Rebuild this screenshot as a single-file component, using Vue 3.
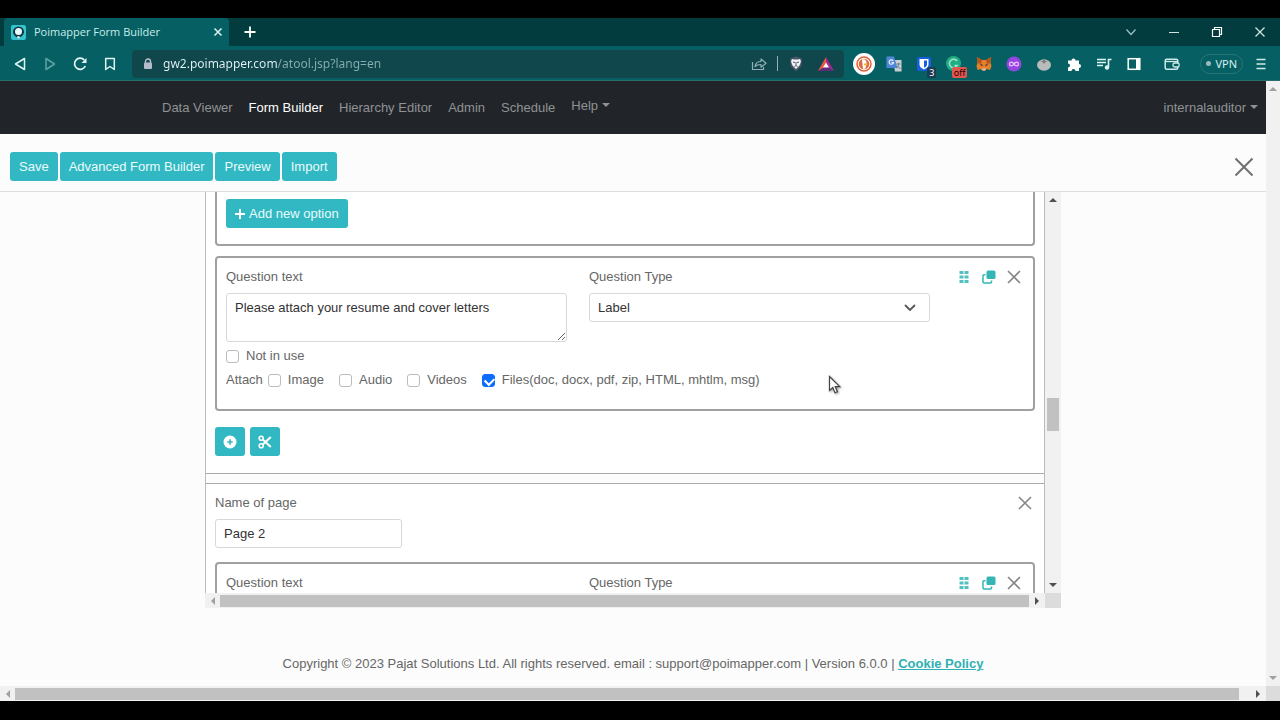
<template>
  <div class="screen">
    <header class="browser">
      <div class="tab-strip">
        <div class="tab">
          <svg class="favicon" viewBox="0 0 15 15" width="15" height="15">
            <rect width="15" height="15" rx="2" fill="#35c3cf" />
            <path d="M7.500 1.500a5.500 5.500 0 0 1 5.500 5.500c0 3-3 4.500-5.500 7-2.500-2.500-5.500-4-5.500-7a5.500 5.500 0 0 1 5.500-5.500z" fill="#12343b" />
            <circle cx="7.500" cy="6.500" r="3.500" fill="#e8fbfc" />
            <path d="M5.500 12l2-1 2 1-2 2z" fill="#d7f4f5" />
          </svg>
          <span class="tab-title">Poimapper Form Builder</span>
          <button class="plain tab-close" aria-label="Close tab">
            <svg viewBox="0 0 10 10" width="10" height="10"><path d="M1.500 1.500l7 7M8.500 1.500l-7 7" stroke="#d5f0f0" stroke-width="1.600" /></svg>
          </button>
        </div>
        <button class="plain new-tab" aria-label="New tab">
          <svg viewBox="0 0 12 12" width="12" height="12"><path d="M6 .5v11M.5 6h11" stroke="#fff" stroke-width="1.800" /></svg>
        </button>
        <div class="window-buttons">
          <button class="plain" aria-label="Search tabs">
            <svg viewBox="0 0 12 12" width="12" height="12"><path d="M1.500 3.500L6 8.500l4.500-5" fill="none" stroke="#9fc4c3" stroke-width="1.200" /></svg>
          </button>
          <button class="plain" aria-label="Minimize">
            <svg viewBox="0 0 12 12" width="12" height="12"><path d="M1 6.500h10" stroke="#cfe3e2" /></svg>
          </button>
          <button class="plain" aria-label="Restore">
            <svg viewBox="0 0 12 12" width="12" height="12"><path d="M1.500 3.500h7v7h-7zM3.500 3.500v-2h7v7h-2" fill="none" stroke="#fff" stroke-width="1.200" /></svg>
          </button>
          <button class="plain" aria-label="Close window">
            <svg viewBox="0 0 12 12" width="12" height="12"><path d="M1.500 1.500l9 9M10.500 1.500l-9 9" stroke="#d5e8e7" stroke-width="1.200" /></svg>
          </button>
        </div>
      </div>

      <div class="address-row">
        <button class="plain tool" aria-label="Back">
          <svg viewBox="0 0 14 14" width="14" height="14"><path d="M11.500 1.500v11L2.500 7z" fill="none" stroke="#dff5f4" stroke-width="1.500" stroke-linejoin="round" /></svg>
        </button>
        <button class="plain tool" aria-label="Forward">
          <svg viewBox="0 0 14 14" width="14" height="14"><path d="M3 1.500v11L11.500 7z" fill="none" stroke="#5da3a3" stroke-width="1.500" stroke-linejoin="round" /></svg>
        </button>
        <button class="plain tool" aria-label="Reload">
          <svg viewBox="0 0 14 14" width="14" height="14">
            <path d="M12.300 9a5.600 5.600 0 1 1-1-6" fill="none" stroke="#e6f8f7" stroke-width="1.700" />
            <path d="M13.500 1v5h-5z" fill="#e6f8f7" />
          </svg>
        </button>
        <button class="plain tool" aria-label="Bookmark">
          <svg viewBox="0 0 14 14" width="14" height="14"><path d="M2.700 1.500h8.600v11L7 9.500l-4.300 3z" fill="none" stroke="#dff5f4" stroke-width="1.500" stroke-linejoin="round" /></svg>
        </button>

        <div class="address-bar">
          <svg viewBox="0 0 10 12" width="10" height="12">
            <path d="M2.500 5V3.500a2.500 2.500 0 0 1 5 0V5" fill="none" stroke="#b4bccb" stroke-width="1.400" />
            <rect x="1" y="4.500" width="8" height="6.500" rx="1" fill="#b4bccb" />
          </svg>
          <input v-model="url" class="url" type="text" aria-label="Address" />
          <svg viewBox="0 0 16 14" width="16" height="14">
            <path d="M1.500 5v7.500h11v-2.500" fill="none" stroke="#90b0b3" stroke-width="1.200" />
            <path d="M4 9.500c.5-3.500 2.500-5 6-5V2l5 4.200-5 4V7.500c-2.500 0-4.500.3-6 2z" fill="none" stroke="#90b0b3" stroke-width="1.200" stroke-linejoin="round" />
          </svg>
          <span class="divider"></span>
          <button class="plain tool" aria-label="Shields">
            <svg viewBox="0 0 14 16" width="14" height="16">
              <path d="M7 .5l6 2-.5 7.500L7 15.500 1.500 10 1 2.500z" fill="#4b5566" />
              <path d="M3 3l2 .5h4l2-.5 1 2.500-1.500 4L7 13 3.500 9.500 2 5.500z" fill="#f1f3f7" />
              <path d="M4 6l2 .5M10 6l-2 .5M7 6v3M5.500 10.500L7 9.500l1.500 1" stroke="#4b5566" fill="none" />
            </svg>
          </button>
          <button class="plain tool" aria-label="Rewards">
            <svg viewBox="0 0 16 14" width="16" height="14">
              <path d="M8 0L0 14l8-4.500z" fill="#f0563f" />
              <path d="M8 0l8 14-8-4.500z" fill="#a22a8e" />
              <path d="M0 14h16L8 9z" fill="#5b2d7d" />
              <path d="M8 5.500l3 5H5z" fill="#fff" />
            </svg>
          </button>
        </div>

        <div class="extensions">
          <button class="plain tool" aria-label="DuckDuckGo">
            <svg viewBox="0 0 22 22" width="22" height="22">
              <circle cx="11" cy="11" r="11" fill="#fff" />
              <circle cx="11" cy="11" r="7" fill="#fff" stroke="#e2613b" stroke-width="1.500" />
              <circle cx="11" cy="11" r="5.300" fill="#df6a43" />
              <path d="M9 6.500c3-.8 4.500 1 4.500 3.500l-1 5.500-2.500.5z" fill="#fff" />
              <path d="M11 10.500h3.500v1.800H11z" fill="#f3b42c" />
            </svg>
          </button>
          <button class="plain tool" aria-label="Translate">
            <svg viewBox="0 0 16 16" width="16" height="16">
              <path d="M7 4h8.500v11.500H9z" fill="#c9cfd2" />
              <path d="M.5.500H8l3.500 11.500h-11z" fill="#4f87d8" />
              <path d="M7.300 5A2.200 2.200 0 1 0 7.500 6.500H5.500" fill="none" stroke="#e8f0ff" stroke-width="1.200" />
              <path d="M10.500 8h4M12.500 7v1c0 2-1 3.500-2 4M11.500 10l3 3" fill="none" stroke="#6b7d88" />
            </svg>
          </button>
          <button class="plain tool" aria-label="Bitwarden">
            <svg viewBox="0 0 16 16" width="16" height="16">
              <rect x="1" y="1" width="14" height="14" rx="2" fill="#175ddc" />
              <path d="M3.500 3h9v5.500c0 2.500-2 3.800-4.500 5-2.500-1.200-4.500-2.500-4.500-5z" fill="#fff" />
              <path d="M8 4.500h3v4c0 1.500-1.300 2.500-3 3.300z" fill="#175ddc" />
            </svg>
            <span class="badge count">3</span>
          </button>
          <button class="plain tool" aria-label="Grammarly">
            <svg viewBox="0 0 16 16" width="16" height="16">
              <circle cx="7.500" cy="7.500" r="7.500" fill="#20ad83" />
              <path d="M11 5a4.200 4.200 0 1 0 .3 4.500H8.500" fill="none" stroke="#9ee5cd" stroke-width="1.500" />
            </svg>
            <span class="badge off">off</span>
          </button>
          <button class="plain tool" aria-label="MetaMask">
            <svg viewBox="0 0 16 16" width="16" height="16">
              <path d="M1 1l5 3h4l5-3-.5 6 1 3-1.500 4-3.500-1-1.500 1.500h-3L4.500 13 1.500 14 .5 10l1-3z" fill="#e4802c" />
              <path d="M1 1l5 3-1 4-3.500-1zM15 1l-5 3 1 4 3.500-1z" fill="#b9541b" />
              <path d="M6 12.500h4l-.5 2h-3z" fill="#d8c2b0" />
              <path d="M4.500 8.500l2 1M11.500 8.500l-2 1" stroke="#2d2a33" stroke-width="1.200" />
            </svg>
          </button>
          <button class="plain tool" aria-label="Loop">
            <svg viewBox="0 0 16 16" width="16" height="16">
              <circle cx="8" cy="8" r="7.500" fill="#9345e0" />
              <path d="M8 8C6.500 5.500 3.500 5.500 3.500 8s3 2.500 4.500 0 4.500-2.500 4.500 0-3 2.500-4.500 0z" fill="none" stroke="#f3c5fb" stroke-width="1.300" />
            </svg>
          </button>
          <button class="plain tool" aria-label="Tomato timer">
            <svg viewBox="0 0 16 16" width="16" height="16">
              <ellipse cx="8" cy="9" rx="7" ry="5.800" fill="#b9bcba" />
              <path d="M4 4.500l3 .5 1-3 1 3 3-.5-3 2-1 1.500L7 6.500z" fill="#737c7a" />
            </svg>
          </button>
          <button class="plain tool" aria-label="Extensions">
            <svg viewBox="0 0 16 16" width="16" height="16">
              <path d="M2 4.500h3.500a2 2 0 1 1 4 0H13V8a2 2 0 1 1 0 4v3H9.500a2 2 0 0 0-4 0H2v-3.500a2 2 0 0 0 0-4z" fill="#fff" />
            </svg>
          </button>
          <button class="plain tool" aria-label="Media">
            <svg viewBox="0 0 16 16" width="16" height="16">
              <path d="M1 3.500h9M1 6.500h9M1 9.500h6M12.500 11V3.500H15.500" fill="none" stroke="#dff5f4" stroke-width="1.600" />
              <circle cx="11" cy="11.500" r="2.200" fill="#dff5f4" />
            </svg>
          </button>
          <button class="plain tool" aria-label="Side panel">
            <svg viewBox="0 0 16 16" width="16" height="16">
              <rect x="2.200" y="2.700" width="11.600" height="10.600" fill="none" stroke="#fff" stroke-width="1.500" />
              <path d="M10 3h4v10h-4z" fill="#fff" />
            </svg>
          </button>
        </div>
        <button class="plain tool wallet" aria-label="Wallet">
          <svg viewBox="0 0 16 16" width="16" height="16">
            <rect x="1.200" y="3.200" width="12.600" height="10" rx="1.500" fill="none" stroke="#cfeaea" stroke-width="1.500" />
            <path d="M1.500 5.500h12" stroke="#cfeaea" stroke-width="1.300" />
            <rect x="9" y="7" width="6.200" height="4" rx="1.800" fill="#0b5c5f" stroke="#cfeaea" stroke-width="1.300" />
          </svg>
        </button>
        <button class="vpn"><i class="dot"></i>VPN</button>
        <button class="plain tool" aria-label="Menu">
          <svg viewBox="0 0 14 14" width="14" height="14"><path d="M2.500 2.500h9M2.500 7h9M2.500 11.500h9" stroke="#cfeaea" stroke-width="1.600" /></svg>
        </button>
      </div>
    </header>

    <div class="viewport">
      <div class="document">
        <nav class="site-nav">
          <a v-for="link in links" :key="link" href="#" :class="{ active: link === 'Form Builder' }">{{ link }}</a>
          <a href="#" class="caret help">Help</a>
          <a href="#" class="caret user">internalauditor</a>
        </nav>

        <div class="actions">
          <button v-for="action in actions" :key="action" class="btn">{{ action }}</button>
          <button class="plain close-form" aria-label="Close form">
            <svg viewBox="0 0 20 20" width="20" height="20"><path d="M1.500 1.500l17 17M18.500 1.500l-17 17" stroke="#707070" stroke-width="2" /></svg>
          </button>
        </div>

        <main class="builder">
          <div class="pages">
            <section class="page page-first">
              <div class="card card-first">
                <button class="btn">
                  <svg viewBox="0 0 10 10" width="10" height="10"><path d="M5 0v10M0 5h10" stroke="#fff" stroke-width="2" /></svg>
                  Add new option
                </button>
              </div>
            </section>
            <section v-for="page in pages" :key="page.id" class="page" :class="{ continued: !page.name }">
              <div v-if="page.name" class="page-head">
                <div class="field">
                  <label :for="`name-${page.id}`">Name of page</label>
                  <input :id="`name-${page.id}`" v-model="page.name" class="control page-name" type="text" />
                </div>
                <button class="plain remove" aria-label="Remove page">
                  <svg viewBox="0 0 14 14" width="14" height="14"><path d="M1 1l12 12M13 1L1 13" stroke="#858585" stroke-width="1.600" /></svg>
                </button>
              </div>

              <div class="card">
                <div class="question">
                  <div class="field">
                    <label :for="`text-${page.id}`">Question text</label>
                    <textarea v-if="page.open" :id="`text-${page.id}`" v-model="page.text" class="control"></textarea>
                  </div>
                  <div class="field">
                    <label :for="`type-${page.id}`">Question Type</label>
                    <div v-if="page.open" class="select-wrap">
                      <select :id="`type-${page.id}`" v-model="page.type" class="control">
                        <option>Label</option>
                      </select>
                      <svg class="chevron" viewBox="0 0 12 12" width="12" height="12"><path d="M1.500 3.500L6 8l4.500-4.500" fill="none" stroke="#555" stroke-width="1.800" stroke-linecap="round" /></svg>
                    </div>
                  </div>
                  <div class="tools">
                    <button class="plain" aria-label="Move question">
                      <svg viewBox="0 0 14 14" width="14" height="14">
                        <path d="M2.500 1h4v3h-4zM7.500 1h4v3h-4zM2.500 5.500h4v3h-4zM7.500 5.500h4v3h-4zM2.500 10h4v3h-4zM7.500 10h4v3h-4z" fill="#35b5b5" opacity=".85" />
                      </svg>
                    </button>
                    <button class="plain" aria-label="Copy question">
                      <svg viewBox="0 0 14 14" width="14" height="14">
                        <rect x="4.500" y=".5" width="9" height="8.500" rx="1.500" fill="#35b5b5" />
                        <path d="M3.500 4.800H2a1 1 0 0 0-1 1V12a1 1 0 0 0 1 1h6.500a1 1 0 0 0 1-1v-1.500" fill="none" stroke="#35b5b5" stroke-width="1.500" />
                      </svg>
                    </button>
                    <button class="plain" aria-label="Remove question">
                      <svg viewBox="0 0 14 14" width="14" height="14"><path d="M1 1l12 12M13 1L1 13" stroke="#858585" stroke-width="1.600" /></svg>
                    </button>
                  </div>
                </div>
                <template v-if="page.open">
                  <div class="checks">
                    <label class="check"><input type="checkbox" />Not in use</label>
                  </div>
                  <div class="checks">
                    <span class="attach-title">Attach</span>
                    <label v-for="kind in attachments" :key="kind.label" class="check">
                      <input v-model="kind.checked" type="checkbox" />{{ kind.label }}
                    </label>
                  </div>
                </template>
              </div>

              <div v-if="page.open" class="page-actions">
                <button class="btn icon-btn" aria-label="Add question">
                  <svg viewBox="0 0 14 14" width="14" height="14">
                    <circle cx="7" cy="7" r="6.500" fill="#fff" />
                    <path d="M7 4.300v5.400M4.300 7h5.400" stroke="#32b8c2" stroke-width="1.500" />
                  </svg>
                </button>
                <button class="btn icon-btn" aria-label="Cut page">
                  <svg viewBox="0 0 14 14" width="14" height="14">
                    <circle cx="3.200" cy="3.300" r="2" fill="none" stroke="#fff" stroke-width="1.600" />
                    <circle cx="3.200" cy="10.700" r="2" fill="none" stroke="#fff" stroke-width="1.600" />
                    <path d="M4.800 4.600l8 7.400M4.800 9.400l8-7.400" stroke="#fff" stroke-width="2" />
                  </svg>
                </button>
              </div>
            </section>
          </div>
          <div class="bar vertical inner-v">
            <i class="arrow up"></i>
            <span class="thumb"></span>
            <i class="arrow down"></i>
          </div>
          <div class="bar horizontal">
            <i class="arrow left faded"></i>
            <span class="thumb"></span>
            <i class="arrow right"></i>
          </div>
          <div class="corner"></div>
        </main>

        <footer class="footer">
          Copyright © 2023 Pajat Solutions Ltd. All rights reserved. email : support@poimapper.com | Version 6.0.0 |
          <a href="#">Cookie Policy</a>
        </footer>
      </div>
      <div class="bar vertical">
        <i class="arrow up faded"></i>
        <i class="arrow down faded"></i>
      </div>
      <div class="bar horizontal outer-h">
        <i class="arrow left faded"></i>
        <span class="thumb"></span>
        <i class="arrow right"></i>
      </div>
      <div class="corner"></div>
    </div>

    <svg class="pointer" viewBox="0 0 14 20" width="14" height="20">
      <path d="M1.500 1.500v14l3.300-3 2.200 5.300 2.400-1-2.200-5.200h4.500z" fill="#fff" stroke="#444" stroke-width="1.200" />
    </svg>
  </div>
</template>

<script setup>
import { ref } from 'vue'

const url = ref('gw2.poimapper.com/atool.jsp?lang=en')

const links = ['Data Viewer', 'Form Builder', 'Hierarchy Editor', 'Admin', 'Schedule']
const actions = ['Save', 'Advanced Form Builder', 'Preview', 'Import']

const pages = ref([
  { id: 1, name: '', text: 'Please attach your resume and cover letters', type: 'Label', open: true },
  { id: 2, name: 'Page 2', text: '', type: 'Label', open: false }
])

const attachments = ref([
  { label: 'Image', checked: false },
  { label: 'Audio', checked: false },
  { label: 'Videos', checked: false },
  { label: 'Files(doc, docx, pdf, zip, HTML, mhtlm, msg)', checked: true }
])
</script>

<style>
body {
  background: #000;
}
</style>

<style scoped>
* {
  box-sizing: border-box;
}

.screen {
  position: relative;
  display: flex;
  flex-direction: column;
  height: 100vh;
  padding: 18px 0 19px;
  background: #000;
  color: #666;
  font-family: "Liberation Sans", Arial, sans-serif;
  font-size: 13px;
  line-height: 20px;
}

button,
input,
textarea,
select {
  font: inherit;
}

svg {
  display: block;
  flex: none;
}

.plain {
  display: flex;
  align-items: center;
  justify-content: center;
  padding: 0;
  border: 0;
  background: none;
}

/* browser chrome */
.browser {
  flex: none;
  font-family: "Noto Sans", sans-serif;
}

.tab-strip {
  display: flex;
  height: 28px;
  padding-left: 4px;
  background: #023c3e;
}

.tab {
  display: flex;
  align-items: center;
  width: 225px;
  padding: 0 6px 0 7px;
  border-radius: 4px 4px 0 0;
  background: #066063;
  color: #c9eceb;
  font-family: "Open Sans", sans-serif;
  font-size: 11px;
}

.tab-title {
  flex: 1;
  margin-left: 8px;
}

.tab-close {
  width: 10px;
}

.new-tab {
  width: 42px;
}

.window-buttons {
  display: flex;
  margin-left: auto;
}

.window-buttons button {
  width: 43px;
}

.window-buttons button:last-child {
  margin-right: -1px;
}

.address-row {
  display: flex;
  align-items: center;
  height: 35px;
  padding: 1px 4px 0 5px;
  border-bottom: 1px solid #2a6e6b;
  background: #066063;
}

.tool {
  position: relative;
  width: 30px;
  height: 28px;
}

.address-bar {
  display: flex;
  flex: 1;
  align-items: center;
  height: 28px;
  margin: 0 5px 0 7px;
  padding: 0 3px 0 11px;
  border-radius: 4px;
  background: #10474d;
}

.url {
  flex: 1;
  min-width: 0;
  padding: 0;
  margin-left: 10px;
  border: 0;
  outline: 0;
  background: linear-gradient(90deg, #e6f4f4 115px, #86aeb0 115px);
  background-clip: text;
  color: transparent;
  font-size: 12px;
}

.divider {
  width: 1px;
  height: 15px;
  margin: 0 3px 0 10px;
  background: #90b0b3;
}

.extensions {
  display: flex;
}

.badge {
  position: absolute;
  border-radius: 2px;
  color: #fff;
  font-size: 9px;
  line-height: 11px;
}

.count {
  right: 3px;
  bottom: 0;
  padding: 0 2px;
  background: #1d3b53;
}

.off {
  right: 2px;
  bottom: 0;
  padding: 0 2px;
  background: #e0574f;
  color: #200;
}

.wallet {
  margin-left: 8px;
}

.vpn {
  display: flex;
  align-items: center;
  gap: 4px;
  height: 20px;
  margin: 0 3px 0 13px;
  padding: 0 5px;
  border: 1px solid #2b7375;
  border-radius: 10px;
  background: none;
  color: #d8eeee;
  font-size: 11px;
}

.dot {
  width: 5px;
  height: 5px;
  border-radius: 50%;
  background: #9fb8be;
}

/* page area */
.viewport {
  display: grid;
  flex: 1;
  grid-template: minmax(0, 1fr) 15px / minmax(0, 1fr) 14px;
  min-height: 0;
}

.document {
  display: flex;
  flex-direction: column;
  min-height: 0;
  background: #fcfcfc;
}

.site-nav {
  display: flex;
  flex: none;
  align-items: center;
  gap: 16px;
  height: 53px;
  padding: 0 8px 0 162px;
  background: #212529;
}

.site-nav a {
  color: #909294;
  text-decoration: none;
}

.site-nav .active {
  color: #fff;
}

.site-nav .help {
  padding-bottom: 3px;
}

.site-nav .user {
  margin-left: auto;
}

.caret::after {
  display: inline-block;
  margin-left: 4px;
  border: 4px solid transparent;
  border-top-color: currentColor;
  border-bottom: 0;
  content: "";
  vertical-align: 3px;
}

.actions {
  display: flex;
  flex: none;
  align-items: center;
  gap: 2px;
  height: 58px;
  padding: 8px 12px 0 10px;
  border-bottom: 1px solid #ddd;
}

.btn {
  display: inline-flex;
  align-items: center;
  justify-content: center;
  gap: 4px;
  height: 29px;
  padding: 0 9px;
  border: 0;
  border-radius: 3px;
  background: #32b8c2;
  color: #e9fbfc;
}

.close-form {
  margin-left: auto;
}

.builder {
  display: grid;
  flex: 1;
  grid-template: minmax(0, 1fr) 15px / minmax(0, 1fr) 16px;
  width: 100%;
  max-width: 856px;
  min-height: 0;
  margin: 0 auto;
}

.pages {
  overflow: hidden;
  border-left: 1px solid #bbb;
  border-right: 1px solid #bbb;
}

.page {
  margin-bottom: 9px;
  padding: 9px 9px 17px;
  border-top: 1px solid #aaa;
  border-bottom: 1px solid #aaa;
  background: #fff;
}

.page-first {
  margin: 0;
  padding: 0 9px;
  border: 0;
}

.page.continued {
  padding-top: 10px;
  border-top: 0;
}

.card {
  padding: 9px 9px 19px;
  border: 2px solid #a0a0a0;
  border-radius: 4px;
}

.card-first {
  padding: 7px 9px 16px;
  border-top: 0;
  border-radius: 0 0 4px 4px;
}

.card-first .btn {
  display: flex;
}

.question {
  display: flex;
  gap: 22px;
}

.field {
  display: flex;
  flex-direction: column;
  gap: 6px;
}

.question .field {
  flex: 0 1 341px;
}

.control {
  width: 100%;
  height: 29px;
  padding: 4px 8px;
  border: 1px solid #d8d8d8;
  border-radius: 3px;
  background: #fff;
  color: #333;
}

textarea.control {
  display: block;
  height: 49px;
  resize: vertical;
}

.select-wrap {
  position: relative;
}

select.control {
  display: block;
  appearance: none;
}

.chevron {
  position: absolute;
  top: 9px;
  right: 14px;
  pointer-events: none;
}

.tools {
  display: flex;
  gap: 11px;
  height: 20px;
  margin-left: auto;
  padding-right: 3px;
}

.checks {
  display: flex;
  gap: 15px;
  margin-top: 4px;
}

.check {
  display: flex;
  align-items: center;
  gap: 7px;
}

.attach-title {
  margin-right: -10px;
}

.check input {
  position: relative;
  width: 13px;
  height: 13px;
  margin: 0;
  border: 1px solid #bbb;
  border-radius: 3px;
  background: #fff;
  appearance: none;
}

.check input:checked {
  border-color: #0d6efd;
  background: #0d6efd;
}

.check input:checked::after {
  position: absolute;
  top: 1px;
  left: 3px;
  width: 5px;
  height: 7px;
  border: solid #fff;
  border-width: 0 2px 2px 0;
  content: "";
  transform: rotate(45deg);
}

.page-actions {
  display: flex;
  gap: 5px;
  margin-top: 16px;
}

.icon-btn {
  width: 30px;
  padding: 0;
}

.page-head {
  display: flex;
  align-items: flex-start;
  justify-content: space-between;
  margin-bottom: 14px;
}

.page-name {
  width: 187px;
}

.remove {
  height: 20px;
  margin-right: 3px;
}

/* scrollbars */
.bar {
  display: flex;
  align-items: center;
  justify-content: space-between;
  background: #f1f1f1;
}

.vertical {
  flex-direction: column;
  padding: 6px 0;
}

.horizontal {
  padding: 0 6px;
}

.thumb {
  background: #c1c1c1;
}

.inner-v .thumb {
  width: 12px;
  height: 33px;
  margin: 196px 0 auto;
}

.horizontal .thumb {
  flex: 1;
  height: 12px;
  margin: 0 6px 0 5px;
}

.outer-h .thumb {
  margin-right: 17px;
}

.arrow {
  border: 4px solid transparent;
}

.up {
  border-top: 0;
  border-bottom-color: #505050;
}

.down {
  border-top-color: #505050;
  border-bottom: 0;
}

.left {
  border-right-color: #505050;
  border-left: 0;
}

.right {
  border-right: 0;
  border-left-color: #505050;
}

.faded {
  opacity: 0.5;
}

.corner {
  background: #dcdcdc;
}

.footer {
  flex: none;
  padding: 46px 0 12px;
  text-align: center;
}

.footer a {
  color: #2fb0b3;
  font-weight: bold;
}

.pointer {
  position: absolute;
  top: 375px;
  left: 828px;
  filter: drop-shadow(1px 1px 1px #999);
}
</style>
